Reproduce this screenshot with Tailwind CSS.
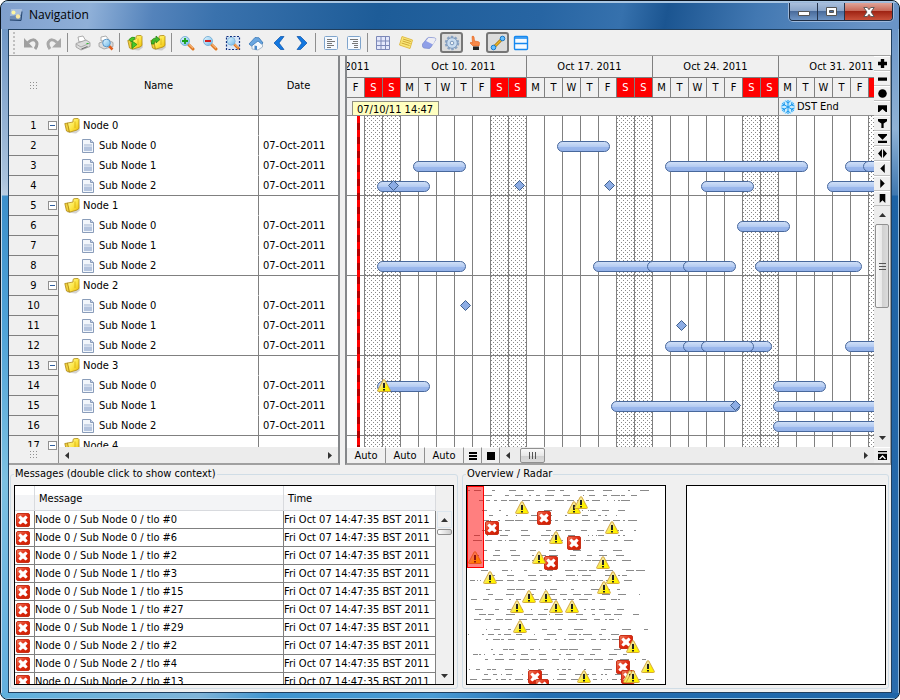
<!DOCTYPE html>
<html lang="en">
<head>
<meta charset="utf-8">
<title>Navigation</title>
<script src="https://cdn.jsdelivr.net/npm/@tailwindcss/browser@4"></script>
</head>
<body class="bg-white font-['DejaVu_Sans_Condensed','DejaVu_Sans',sans-serif] text-[11px] leading-[14px] text-black">

<svg class="absolute h-0 w-0" aria-hidden="true">
  <defs>
    <linearGradient id="gw" x1="0" y1="0" x2="1" y2="1"><stop offset=".35" stop-color="#f3e6a0"/><stop offset=".65" stop-color="#fff200"/></linearGradient>
    <linearGradient id="ge" x1="0" y1="0" x2="1" y2="1"><stop offset="0" stop-color="#f08060"/><stop offset=".5" stop-color="#e02810"/><stop offset="1" stop-color="#c82000"/></linearGradient>
    <linearGradient id="gb" x1="0" y1="0" x2="0" y2="1"><stop offset="0" stop-color="#d4e2f8"/><stop offset=".5" stop-color="#b4cbf2"/><stop offset=".55" stop-color="#9bb8ec"/><stop offset="1" stop-color="#93b1e8"/></linearGradient>
    <linearGradient id="gf" x1="0" y1="0" x2="1" y2="1"><stop offset="0" stop-color="#fffbb0"/><stop offset=".5" stop-color="#fde84a"/><stop offset="1" stop-color="#ecb800"/></linearGradient>
    <linearGradient id="gl" x1="0" y1="0" x2="1" y2="1"><stop offset="0" stop-color="#e8f8ff"/><stop offset="1" stop-color="#6cb8ea"/></linearGradient>
    <symbol id="warn" viewBox="0 0 14 13"><path d="M6.2 1q.8-1 1.6 0L13.3 11.4q.3 1.1-.7 1.1H1.4q-1 0-.7-1.1z" fill="url(#gw)" stroke="#d0a030" stroke-width=".9"/><path d="M6 4h2v5H6zM6 10h2v1.6H6z" fill="#222"/></symbol>
    <symbol id="err" viewBox="0 0 14 14"><rect x=".5" y=".5" width="13" height="13" rx="1.5" fill="url(#ge)" stroke="#c83018"/><path d="M4.3 2.5 7 4.700l2.700-2.200 2 2L9.500 7l2.200 2.700-2 1.900L7 9.400l-2.700 2.200-2-1.900L4.500 7 2.300 4.500z" fill="#fff"/></symbol>
    <symbol id="folder" viewBox="0 0 16 16"><path d="M3 14.500l9 1 3.800-3-1-9z" fill="#888" opacity=".35"/><path d="M.8 5.500 4 5l1.500 9-3-1z" fill="#f0d040" stroke="#b08a10" stroke-width=".8"/><path d="M3.500 5 9 4V1.500l1-.8 4-.3 1 1V10.500l-2 1.500-7.500 2.200z" fill="url(#gf)" stroke="#b08a10" stroke-width=".8"/><path d="M11 3.500V10" stroke="#d8ac10" stroke-width=".8"/></symbol>
    <symbol id="doc" viewBox="0 0 12 14"><path d="M.5.5h8L11.500 3.500v10H.5z" fill="#f2f6fb" stroke="#8a9dba"/><path d="M8.500.5v3h3" fill="#c8d4e8" stroke="#8a9dba"/><path d="M2 5.500h8v1H2z" fill="#9fb2d0"/><path d="M2 7.500h8V12H2z" fill="#b4c4de"/></symbol>
    <symbol id="dots" viewBox="0 0 8 8"><g fill="#909090"><path d="M0 0h1v1H0zM3 0h1v1H3zM6 0h1v1H6zM0 3h1v1H0zM3 3h1v1H3zM6 3h1v1H6zM0 6h1v1H0zM3 6h1v1H3zM6 6h1v1H6z"/></g></symbol>
    <symbol id="lens" viewBox="0 0 16 16"><path d="M9.500 9.500 14 14" stroke="#e07820" stroke-width="3" stroke-linecap="round"/><path d="M9.500 9 14 13.300" stroke="#ffd0a0" stroke-width="1"/><circle cx="6" cy="6" r="4.500" fill="url(#gl)" stroke="#7fb4d8"/></symbol>
  </defs>
</svg>

<div class="flex h-screen min-h-[500px] flex-col overflow-hidden rounded-lg border border-[#0a1420] bg-[#4f97cc]">

  <header class="flex h-[28px] shrink-0 items-start border-t-2 border-[#a9c6e2] bg-[linear-gradient(100deg,#7f9fcd_0%,#8fb0d8_10%,#5483bb_17%,#3a72ad_24%,#1d5c98_42%,#2765a3_60%,#3671ad_69%,#1b5591_74%,#4278b2_84%,#6a94c6_97%)]">
    <svg class="mt-[5px] ml-2 h-3.5 w-3.5" viewBox="0 0 14 14"><path d="M2 1h11l-1 11.500H.5z" fill="#6f8cb4"/><path d="M2 1h11l-.5 5.500L1 8z" fill="#a9bfdc"/><circle cx="4.500" cy="4.500" r="2" fill="#fff6a0"/><circle cx="9" cy="8.500" r="2.200" fill="#fbe9a0"/><path d="M1 12l11 .5 1-9" stroke="#24456f" fill="none"/></svg>
    <h1 class="ml-1.5 mt-1 font-['Open_Sans','Noto_Sans',sans-serif] text-[12px] leading-4">Navigation</h1>
    <div class="mr-[6px] ml-auto flex h-[18px] overflow-hidden rounded-b border border-t-0 border-[#1c2c44] shadow-[0_0_0_1px_#9db8da]">
      <button aria-label="Minimize" class="flex w-7 items-center justify-center border-r border-[#24344c] bg-[linear-gradient(#a9bfdc_0,#8ba6ca_45%,#4a6c9c_50%,#6f95c4_100%)]"><svg class="mt-1 h-[5px] w-3" viewBox="0 0 12 5"><path d="M.5.5h11v4H.5z" fill="#fff" stroke="#555"/></svg></button>
      <button aria-label="Maximize" class="flex w-[27px] items-center justify-center border-r border-[#24344c] bg-[linear-gradient(#a9bfdc_0,#8ba6ca_45%,#4a6c9c_50%,#6f95c4_100%)]"><svg class="h-[9px] w-[11px]" viewBox="0 0 11 9"><path d="M.5.5h10v8H.5zM3.500 3.500h4v2h-4z" fill="#fff" fill-rule="evenodd" stroke="#555"/></svg></button>
      <button aria-label="Close" class="flex w-[47px] items-center justify-center bg-[linear-gradient(#e0a498_0,#c86a5a_45%,#a02414_50%,#c8513a_100%)]"><svg class="h-2.5 w-3" viewBox="0 0 12 10"><path d="M.8.5h3.500L6 2.700 7.700.5h3.500L8 5l3.200 4.500H7.700L6 7.300 4.300 9.500H.8L4 5z" fill="#fff" stroke="#555" stroke-width=".9"/></svg></button>
    </div>
  </header>

  <div class="flex min-h-0 flex-1">
    <div class="w-[7px] shrink-0 border-l border-[#c8dcee] bg-[linear-gradient(#6f97c6_0,#a9c2dc_150px,#b9cde2_166px,#3c8fcb_167px,#4fa3d8_300px,#7cc0e2_450px,#62aede_100%)]"></div>

    <main class="flex min-w-0 flex-1 flex-col border border-[#1f3f5f] bg-[#f0f0f0]">

      <!-- toolbar -->
      <div role="toolbar" aria-label="Main" class="flex h-[26px] shrink-0 items-center border-b border-[#a0a0a0] pl-1 [&>button]:flex [&>button]:h-[21px] [&>button]:w-[23px] [&>button]:shrink-0 [&>button]:items-center [&>button]:justify-center [&>i]:ml-[2px] [&>i]:mr-[3px] [&>i]:h-[19px] [&>i]:w-px [&>i]:bg-[#8f8f8f] [&_svg]:h-4 [&_svg]:w-4">
        <span class="mr-[4px] h-[22px] w-0 border-l-2 border-dotted border-[#c0c0c0]"></span>
        <button aria-label="Undo"><svg viewBox="0 0 16 16"><path d="M12 14q3-4 1.500-7-3-4.500-8.500.5" fill="none" stroke="#a0a0a0" stroke-width="3"/><path d="M1 3v9.500h9z" fill="#a0a0a0"/></svg></button>
        <button aria-label="Redo"><svg viewBox="0 0 16 16"><path d="M4 14Q1 10 2.500 7q3-4.500 8.500.5" fill="none" stroke="#a8a8a8" stroke-width="3"/><path d="M15 3v9.500H6z" fill="#a8a8a8"/></svg></button>
        <i></i>
        <button aria-label="Print"><svg viewBox="0 0 16 16"><path d="M4 7 3 2l5-1 3 5z" fill="#fff" stroke="#999" stroke-width=".8"/><path d="M1 8.500 11 5l4 2.500v4L6 15 1 12z" fill="#dcdcdc" stroke="#999" stroke-width=".8"/><path d="M1 9l5 3 9-4" fill="none" stroke="#aaa"/><path d="M6.500 13.500l6-2.500v1l-6 2.500z" fill="#666"/><path d="M11.500 8.500h2" stroke="#30c030"/></svg></button>
        <button aria-label="Print preview"><svg viewBox="0 0 16 16"><path d="M3 6 3 2l5-1 3 4z" fill="#fff" stroke="#999" stroke-width=".8"/><path d="M1 8 10 5l5 2.500v4L6 14 1 11.500z" fill="#dcdcdc" stroke="#999" stroke-width=".8"/><path d="m11 11 3.500 3.500" stroke="#e06020" stroke-width="2.500"/><circle cx="8.500" cy="8" r="3.800" fill="url(#gl)" stroke="#5c98c8"/></svg></button>
        <i></i>
        <button aria-label="Expand all"><svg viewBox="0 0 16 16"><use href="#folder"/><path d="M2 4.500Q5 1 8 2.500L7 5Q5 4.500 4.500 7zM5 6l5 3.500L5 13.500z" fill="#48c828" stroke="#208810" stroke-width=".7"/></svg></button>
        <button aria-label="Collapse all"><svg viewBox="0 0 16 16"><use href="#folder"/><path d="M1.500 9Q1 3 6 3V1l4 3.500L6 8V6Q4 6 4 9z" fill="#40b828" stroke="#208010" stroke-width=".7"/></svg></button>
        <i></i>
        <button aria-label="Zoom in"><svg viewBox="0 0 16 16"><use href="#lens"/><path d="M6 3v6M3 6h6" stroke="#18a018" stroke-width="1.800"/></svg></button>
        <button aria-label="Zoom out"><svg viewBox="0 0 16 16"><use href="#lens"/><path d="M3 6h6" stroke="#d02020" stroke-width="1.800"/></svg></button>
        <button aria-label="Zoom to selection"><svg viewBox="0 0 16 16"><path d="M1.500 1.500h13v13h-13z" fill="#d8e6f8" stroke="#103080" stroke-dasharray="2 1.500" stroke-width="1.200"/><use href="#lens" x="1" y="1" width="14" height="14"/></svg></button>
        <button aria-label="Home"><svg viewBox="0 0 16 16"><path d="M4 8v6l6 1 4.500-3V7L9 4z" fill="#f4f8fc" stroke="#88a0b8" stroke-width=".7"/><path d="M1 9 7 2.500l4 .3 4 5.200-1.500 1L10 6 3.500 11z" fill="#6aa6e0" stroke="#3a78b8" stroke-width=".8"/><path d="M6.500 10.500 9 11v4l-2.500-.6z" fill="#4a88c8"/></svg></button>
        <button aria-label="Previous"><svg viewBox="0 0 16 16"><path d="M9.500 1.500h3.500L8 8l5 6.500H9.500L3 8z" fill="#1478e0" stroke="#0a50a8" stroke-width=".7"/></svg></button>
        <button aria-label="Next"><svg viewBox="0 0 16 16"><path d="M6.500 1.500H3L8 8l-5 6.500h3.500L13 8z" fill="#1478e0" stroke="#0a50a8" stroke-width=".7"/></svg></button>
        <i></i>
        <button aria-label="Align left"><svg viewBox="0 0 16 16"><rect x="1.500" y="1.500" width="13" height="13" rx="1" fill="#f6faff" stroke="#7fa4cc"/><path d="M4 4.500h5M4 6.500h8M4 8.500h5M4 10.500h7M4 12.500h4" stroke="#777"/></svg></button>
        <button aria-label="Align right"><svg viewBox="0 0 16 16"><rect x="1.500" y="1.500" width="13" height="13" rx="1" fill="#f6faff" stroke="#7fa4cc"/><path d="M4 4.500h8M7 6.500h5M6 8.500h6M8 10.500h4M8 12.500h4" stroke="#777"/></svg></button>
        <i></i>
        <button aria-label="Grid"><svg viewBox="0 0 16 16"><path d="M1.500 1.500h13v13h-13zM6 1.500v13M10.500 1.500v13M1.500 6h13M1.500 10.500h13" fill="#e4e8fc" stroke="#7c88b8"/></svg></button>
        <button aria-label="Notes"><svg viewBox="0 0 16 16"><path d="M4 1.500 14.500 5 12 13.500 1.500 10z" fill="#fbe878" stroke="#e0bc48"/><path d="m5 4 8 2.500M4.500 6l8 2.500M3.500 8l8 2.500" stroke="#c8a030" stroke-width=".9"/></svg></button>
        <button aria-label="Erase"><svg viewBox="0 0 16 16"><path d="m1.500 9 5-6q.5-.7 1.500-.6l6 .6q1.500.5.500 2L10 12q-1 1.500-2 1.500L3 13q-1.500-.5-1.500-2z" fill="#8f9fe8" stroke="#7888cc" stroke-width=".7"/><path d="M5 6 7.500 2.700l6.500.5q1 .3.500 1.600L12 9.500Z" fill="#eeeef4"/></svg></button>
        <button aria-label="Settings" aria-pressed="true" class="rounded-[3px] border-2 border-[#777] bg-[#dcdcdc]"><svg class="shrink-0" viewBox="0 0 16 16"><circle cx="8" cy="8" r="6" fill="none" stroke="#8aa4c4" stroke-width="2.500" stroke-dasharray="2.400 1.370"/><circle cx="8" cy="8" r="5.300" fill="#c8dcf0" stroke="#7c98bc"/><circle cx="8" cy="8" r="1.800" fill="#eef2f6" stroke="#7c98bc"/></svg></button>
        <button aria-label="Pan"><svg viewBox="0 0 16 16"><path d="M5 1.500q1.500-1 2 .5l.5 4 4 .7q1.200.3 1 1.800L12 11H6L3 8q.5-1.500 2.500 0z" fill="#f88848" stroke="#e06018" stroke-width=".6"/><path d="M6 11.500h6V15H6z" fill="#222"/></svg></button>
        <button aria-label="Links" aria-pressed="true" class="rounded-[3px] border-2 border-[#777] bg-[#dcdcdc]"><svg class="shrink-0" viewBox="0 0 16 16"><path d="m4 12 8-8" stroke="#a07008" stroke-width="3"/><path d="m4 12 8-8" stroke="#f0b828" stroke-width="1.500"/><circle cx="3.500" cy="12.500" r="2.300" fill="#68c0ff" stroke="#1878c8"/><circle cx="12.500" cy="3.500" r="2.300" fill="#68c0ff" stroke="#1878c8"/></svg></button>
        <button aria-label="Split view"><svg viewBox="0 0 16 16"><rect x="1.500" y="1.500" width="13" height="13" rx="1" fill="#f4faff" stroke="#1488f0" stroke-width="1.400"/><path d="M1.500 3h13M1.500 8.500h13" stroke="#1488f0" stroke-width="1.600"/></svg></button>
      </div>

      <!-- upper panes -->
      <div class="flex min-h-0 flex-1">

        <section aria-label="Nodes" class="flex w-[331px] shrink-0 flex-col border-r-2 border-b-2 border-[#85878a] border-b-[#a0a0a0]">
          <div class="min-h-0 flex-1 overflow-hidden bg-white">
            <table class="w-full table-fixed border-separate border-spacing-0">
              <thead>
                <tr class="h-[60px] bg-[#f0f0f0]">
                  <th class="w-[50px] border-r border-b border-[#909090] p-0"><svg class="mx-auto h-2 w-2"><use href="#dots"/></svg></th>
                  <th class="w-[200px] border-r border-b border-[#808080] p-0 font-normal">Name</th>
                  <th class="border-b border-[#808080] p-0 font-normal">Date</th>
                </tr>
              </thead>
              <tbody id="nodes"></tbody>
            </table>
          </div>
          <div class="flex h-4 shrink-0 bg-[#f0f0f0]">
            <div class="flex w-[50px] justify-center border-r border-[#909090] pt-1"><svg class="h-2 w-2"><use href="#dots"/></svg></div>
            <div class="flex flex-1 items-center justify-between bg-[#ececec] px-1.5">
              <button aria-label="Scroll left" class="flex"><svg class="h-[7px] w-1" viewBox="0 0 4 7"><path d="M4 0v7L0 3.500z" fill="#333"/></svg></button>
              <button aria-label="Scroll right" class="flex"><svg class="h-[7px] w-1" viewBox="0 0 4 7"><path d="M0 0v7l4-3.500z" fill="#333"/></svg></button>
            </div>
          </div>
        </section>

        <section aria-label="Schedule" class="ml-[5px] flex min-w-0 flex-1 border-b-2 border-l-2 border-[#85878a] border-b-[#a0a0a0]">
          <div class="flex min-w-0 flex-1 flex-col">
            <div class="relative h-[60px] shrink-0 overflow-hidden border-b border-[#909090]">
              <div id="weeks" class="-ml-[72px] flex h-[22px] border-b border-[#808080]"></div>
              <div id="days" class="flex h-5 border-b border-[#808080]"></div>
              <div class="absolute top-[45px] left-[5px] h-4 border border-[#909080] bg-[#ffffc0] px-[5px] pl-1 leading-4">07/10/11 14:47</div>
              <div class="absolute top-[42px] left-[431px] flex h-[18px] items-center gap-px border-l border-[#808080] pl-px">
                <svg class="h-4 w-4" viewBox="0 0 16 16"><circle cx="8" cy="8" r="7.500" fill="#c8ecff"/><path d="M8 1v14M2 4.500l12 7M14 4.500l-12 7M5.500 2 8 4l2.500-2M5.500 14 8 12l2.500 2M1.500 7l3-1-.5-3M14.500 9l-3 1 .5 3M14.500 7l-3-1 .5-3M1.500 9l3 1-.5 3" stroke="#1c98ec" fill="none"/></svg>
                <span>DST End</span>
              </div>
            </div>
            <svg id="chart" class="block min-h-0 w-full flex-1 bg-white" role="img" aria-label="Schedule chart"></svg>
            <div class="flex h-4 shrink-0 [&>button]:flex [&>button]:items-center [&>button]:justify-center [&>button]:border-t [&>button]:border-r [&>button]:border-t-white [&>button]:border-r-[#909090]">
              <button class="w-[39px]">Auto</button><button class="w-[39px]">Auto</button><button class="w-[39px]">Auto</button>
              <button aria-label="Rows" class="w-[18px]"><svg class="h-2 w-2" viewBox="0 0 8 8"><path d="M0 0h8v2H0zM0 3h8v2H0zM0 6h8v2H0z"/></svg></button>
              <button aria-label="Fit" class="w-[18px]"><svg class="h-2 w-2" viewBox="0 0 8 8"><path d="M0 0h8v8H0z"/></svg></button>
              <div class="flex flex-1 items-center bg-[#ececec] px-1.5">
                <svg class="mr-[10px] h-[7px] w-1" viewBox="0 0 4 7"><path d="M4 0v7L0 3.500z" fill="#333"/></svg>
                <div class="flex h-[15px] w-[25px] items-center justify-center gap-[2px] rounded-[2px] border border-[#909090] bg-[linear-gradient(#f8f8f8_0,#e8e8e8_50%,#d0d0d0_50%,#dcdcdc)]"><i class="h-[7px] w-px bg-[#555]"></i><i class="h-[7px] w-px bg-[#555]"></i><i class="h-[7px] w-px bg-[#555]"></i></div>
                <svg class="ml-auto h-[7px] w-1" viewBox="0 0 4 7"><path d="M0 0v7l4-3.500z" fill="#333"/></svg>
              </div>
            </div>
          </div>
          <div class="flex w-[17px] shrink-0 flex-col border-r border-[#a0a0a0] bg-[#f0f0f0]">
            <div class="flex flex-col [&>button]:flex [&>button]:h-[15px] [&>button]:items-center [&>button]:justify-center [&>button]:border-t [&>button]:border-b [&>button]:border-t-white [&>button]:border-b-[#c0c0c0] [&_svg]:h-[9px] [&_svg]:w-[9px]">
              <button aria-label="Zoom in time"><svg viewBox="0 0 8 8"><path d="M2.500 0h3v2.500H8v3H5.500V8h-3V5.500H0v-3h2.500z"/></svg></button>
              <button aria-label="Zoom out time"><svg viewBox="0 0 8 8"><path d="M0 3h8v3H0z"/></svg></button>
              <button aria-label="Now"><svg viewBox="0 0 8 8"><circle cx="4" cy="4" r="3.800"/></svg></button>
              <button aria-label="Span"><svg viewBox="0 0 8 8"><path d="M0 1h8v6H7L4 4.500 1 7H0z"/></svg></button>
              <button aria-label="Top"><svg viewBox="0 0 8 8"><path d="M0 0h8v2L5 4v4H3V4L0 2z"/></svg></button>
              <button aria-label="Down"><svg viewBox="0 0 8 8"><path d="M0 0h8v1L4 5 0 1zM0 6h8v2H0z"/></svg></button>
              <button aria-label="Both ways"><svg viewBox="0 0 8 8"><path d="M3.500 0v8L0 4zM4.500 0v8L8 4z"/></svg></button>
              <button aria-label="Left"><svg viewBox="0 0 8 8"><path d="M6 0v8L2 4z"/></svg></button>
              <button aria-label="Right"><svg viewBox="0 0 8 8"><path d="M2 0v8l4-4z"/></svg></button>
              <button aria-label="Bookmark"><svg viewBox="0 0 8 8"><path d="M1.500 0h5v8L4 5.500 1.500 8z"/></svg></button>
            </div>
            <div class="flex flex-1 flex-col items-center bg-[#ececec] py-[7px]">
              <svg class="h-1 w-[7px]" viewBox="0 0 7 4"><path d="M0 4h7L3.500 0z" fill="#333"/></svg>
              <div class="mt-[7px] flex h-[84px] w-[14px] flex-col items-center justify-center gap-[2px] rounded-[2px] border border-[#909090] bg-[linear-gradient(90deg,#f8f8f8_0,#e8e8e8_50%,#d0d0d0_50%,#dcdcdc)]"><i class="h-px w-[7px] bg-[#555]"></i><i class="h-px w-[7px] bg-[#555]"></i><i class="h-px w-[7px] bg-[#555]"></i></div>
              <svg class="mt-auto h-1 w-[7px]" viewBox="0 0 7 4"><path d="M0 0h7L3.500 4z" fill="#333"/></svg>
            </div>
            <button aria-label="Scroll to top" class="flex h-4 items-center justify-center border-t border-white"><svg class="h-[9px] w-[9px]" viewBox="0 0 9 9"><path d="M0 0h9v9H0z"/><path d="M0 2h9M1.500 8 4.500 5l3 3" stroke="#fff" stroke-width="1.300" fill="none"/></svg></button>
          </div>
        </section>
      </div>

      <!-- lower panes -->
      <div class="flex h-[227px] shrink-0 gap-1 pt-[2px] pr-[2px] pb-[3px] pl-px">
        <fieldset class="flex w-[448px] min-w-0 flex-col rounded-[3px] border border-[#d0dde6] px-[3px] pb-[3px]">
          <legend class="px-px">Messages (double click to show context)</legend>
          <div class="mt-1 flex h-[201px] overflow-hidden border border-black">
            <div class="min-w-0 flex-1 overflow-hidden bg-white">
              <table class="w-full table-fixed border-separate border-spacing-0">
                <thead>
                  <tr class="h-[25px] bg-[linear-gradient(#fff_35%,#f3f4f6_36%)] text-left">
                    <th class="w-5 border-r border-b border-[#d8dade] p-0" aria-label="Severity"></th>
                    <th class="w-[249px] border-r border-b border-[#d8dade] p-0 pt-[2px] pl-1 font-normal">Message</th>
                    <th class="border-r border-b border-[#d8dade] p-0 pt-[2px] pl-1 font-normal">Time</th>
                  </tr>
                </thead>
                <tbody id="messages"></tbody>
              </table>
            </div>
            <div class="flex w-[17px] shrink-0 flex-col items-center bg-[#f0f0f0] pt-[25px] pb-1.5">
              <div class="flex h-[17px] w-[15px] items-center justify-center border border-[#dce6ee]"><svg class="h-1 w-[7px]" viewBox="0 0 7 4"><path d="M0 4h7L3.500 0z" fill="#333"/></svg></div>
              <div class="mt-px h-1.5 w-[15px] rounded-[2px] border border-[#909090] bg-[linear-gradient(90deg,#fff,#ccc)]"></div>
              <svg class="mt-auto h-1 w-[7px]" viewBox="0 0 7 4"><path d="M0 0h7L3.500 4z" fill="#333"/></svg>
            </div>
          </div>
        </fieldset>
        <fieldset class="min-w-0 flex-1 rounded-[3px] border border-[#d0dde6] px-[3px]">
          <legend class="px-px">Overview / Radar</legend>
          <div class="mt-1 flex gap-5">
            <svg id="radar" class="h-[200px] w-[200px] shrink-0 border border-black bg-white" role="img" aria-label="Radar"></svg>
            <div class="h-[200px] w-[200px] shrink-0 border border-black bg-white"></div>
          </div>
        </fieldset>
      </div>
    </main>

    <div class="w-[7px] shrink-0 border-r border-[#8fb8dc] bg-[linear-gradient(#6a94c6_0,#8fb2d6_100px,#3f78b0_166px,#1c62a4_167px,#2a6cac_100%)]"></div>
  </div>
  <div class="h-[6px] shrink-0 border-b border-[#9cc8e6] bg-[linear-gradient(90deg,#5fb0dc_0%,#7fb4d8_22%,#3f94cf_30%,#4a9bd4_48%,#2470b4_60%,#1f66a8_100%)]"></div>
</div>

<script>
  const html = (id, s) => { document.getElementById(id).innerHTML = s; };

  let rows = '';
  for (let i = 0; i < 17; i++) {
    const node = i % 4 === 0, last = i % 4 === 3;
    const line = last ? 'border-b border-[#808080]' : 'border-b border-transparent';
    rows += `<tr class="h-5">
      <td class="border-r border-b border-[#808080] bg-[#f0f0f0] p-0"><div class="flex h-[19px] items-center"><span class="w-[50px] text-center">${i + 1}</span>${node ? '<button aria-label="Collapse" class="absolute ml-[39px] flex h-[9px] w-[9px] items-center justify-center border border-[#909090] bg-white"><i class="h-px w-[5px] bg-[#3060a0]"></i></button>' : ''}</div></td>
      <td class="${line} border-r border-r-[#808080] p-0">${node
        ? `<div class="flex h-[19px] items-center gap-[3px] pl-[5px]"><svg class="h-4 w-4"><use href="#folder"/></svg>Node ${i / 4}</div>`
        : `<div class="flex h-[19px] items-center gap-[5px] pl-[23px]"><svg class="h-3.5 w-3"><use href="#doc"/></svg>Sub Node ${i % 4 - 1}</div>`}</td>
      <td class="${line} p-0 pl-1">${node ? '' : '07-Oct-2011'}</td></tr>`;
  }
  html('nodes', rows);

  html('weeks', ['Oct 03. 2011', 'Oct 10. 2011', 'Oct 17. 2011', 'Oct 24. 2011', 'Oct 31. 2011']
    .map(w => `<div class="flex w-[126px] shrink-0 items-center justify-center border-r border-[#808080]">${w}</div>`).join(''));

  let days = '';
  for (let i = 0; i < 60; i++) {
    const d = 'FSSMTWT'[i % 7];
    days += d === 'S'
      ? '<div class="flex w-[18px] shrink-0 items-center justify-center border-r border-[#808080] bg-[#ff0000] text-white">S</div>'
      : `<div class="flex w-[18px] shrink-0 items-center justify-center border-r border-[#808080]">${d}</div>`;
  }
  html('days', days);

  /* chart: 18px per day, 20px per row */
  let c = `<defs><pattern id="wk" width="4" height="4" patternUnits="userSpaceOnUse"><path d="M0 0h1v1H0zM2 2h1v1H2z" fill="#888"/></pattern>
    <pattern id="now" width="3" height="14" patternUnits="userSpaceOnUse" patternTransform="translate(10 0)"><path d="M0 0h3v7H0z" fill="#f00"/><path d="M0 7h3v7H0z" fill="#b40000"/></pattern></defs>`;
  for (let i = 0; i < 100; i++) {
    if (i % 7 === 1 || i % 7 === 2) c += `<rect x="${i * 18}" width="17" height="100%" fill="url(#wk)"/>`;
    c += `<rect x="${i * 18 + 17}" width="1" height="100%" fill="#808080"/>`;
  }
  for (let y = 79; y < 1000; y += 80) c += `<rect y="${y}" width="100%" height="1" fill="#808080"/>`;
  c += '<rect x="10" width="3" height="100%" fill="url(#now)"/>';
  const bars = [[2,210,263],[3,66,119],[3,318,461],[3,498,551],[3,516,569],[4,30,83],[4,354,407],[4,480,569],
    [6,390,443],[8,30,119],[8,246,335],[8,300,371],[8,336,389],[8,408,515],[12,318,371],[12,336,389],[12,372,425],[12,354,407],[12,498,569],
    [14,30,83],[14,426,479],[15,264,393],[15,426,569],[16,426,569]];
  for (const [r, a, b] of bars)
    c += `<rect x="${a + .5}" y="${r * 20 + 5 - 19.5}" width="${b - a - 1}" height="10" rx="5" fill="url(#gb)" stroke="#48689c"/>`;
  for (const [x, r] of [[46,4],[172,4],[262,4],[118,10],[334,11],[388,15]])
    c += `<path d="M${x + .5} ${r * 20 - 15.5}l5 5-5 5-5-5z" fill="#8cace4" stroke="#40608c"/>`;
  c += '<use href="#warn" x="30" y="263" width="14" height="13"/>';
  html('chart', c);

  const msgs = ['0 / tlo #0','0 / tlo #6','1 / tlo #2','1 / tlo #3','1 / tlo #15','1 / tlo #27','1 / tlo #29','2 / tlo #2','2 / tlo #4','2 / tlo #13'];
  html('messages', msgs.map(m => `<tr class="h-[18px]">
    <td class="border-r border-b border-[#808080] p-0"><svg class="ml-px h-3.5 w-3.5"><use href="#err"/></svg></td>
    <td class="border-r border-b border-[#808080] p-0 whitespace-nowrap">Node 0 / Sub Node ${m}</td>
    <td class="border-r border-b border-[#808080] p-0 whitespace-nowrap">Fri Oct 07 14:47:35 BST 2011</td></tr>`).join(''));

  /* radar: three task lines per node, drawn as short dashes */
  let seed = 7;
  const rnd = () => (seed = (seed * 16807) % 2147483647) / 2147483647;
  let r = '';
  [4,9,14,24,29,34,44,49,54,64,69,74,84,89,94,103,108,113,123,128,133,143,148,153,163,168,173,183,188,193].forEach((y, i) => {
    let x = rnd() * 25;
    const gap = [18, 14, 6][i % 3], end = 155 + rnd() * 27;
    while (x < end) {
      const w = 1 + Math.floor(rnd() * 9);
      r += `<rect x="${Math.floor(x)}" y="${y}" width="${w}" height="1" fill="#8a8a8a"/>`;
      x += w + 1 + rnd() * gap;
    }
  });
  for (const [x, y] of [[25,42],[77,32],[107,57],[84,77],[159,156],[156,181],[68,191],[161,191],[75,200]])
    r += `<use href="#err" x="${x - 7}" y="${y - 7}" width="14" height="14"/>`;
  for (const [x, y] of [[55,22],[107,22],[114,17],[145,42],[89,52],[8,72],[72,72],[136,77],[23,92],[146,92],[137,102],[62,111],[79,111],[50,121],[89,121],[105,121],[53,141],[166,161],[181,181],[117,191],[163,191],[166,191]])
    r += `<use href="#warn" x="${x - 7}" y="${y - 7}" width="14" height="13"/>`;
  r += '<rect x=".5" y=".5" width="16" height="81" fill="#ff0000" fill-opacity=".5" stroke="#ff0000"/>';
  html('radar', r);
</script>
</body>
</html>
